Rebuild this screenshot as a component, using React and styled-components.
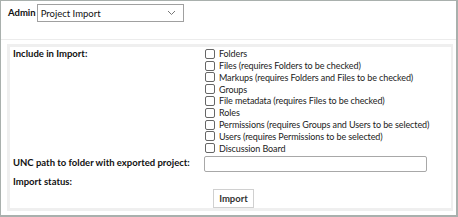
import React from 'react';
import styled, { createGlobalStyle } from 'styled-components';

const GlobalStyle = createGlobalStyle`
  body {
    margin: 0;
    font-family: Lato, "Open Sans", sans-serif;
    background: #fff;
  }
`;

const Root = styled.div`
  width: 458px;
  height: 217px;
  box-sizing: border-box;
  border: 1px solid #a9b0ad;
  border-bottom-width: 2px;
  border-right-width: 2px;
  display: flex;
  flex-direction: column;
  color: #111;
`;

const TopBar = styled.div`
  display: flex;
  align-items: flex-start;
  gap: 1px;
  padding: 3px 7px 0;
  height: 39px;
  box-sizing: border-box;
  border-bottom: 1px solid #ececec;
`;

const Label = styled.span`
  font-size: 9.5px;
  font-weight: 700;
  line-height: 18px;
`;

const Select = styled.div`
  width: 147px;
  height: 18px;
  box-sizing: border-box;
  border: 1px solid #a0a0a0;
  display: flex;
  align-items: center;
  justify-content: space-between;
  padding: 0 7px 0 3px;
  font-size: 9.5px;
`;

const Panel = styled.div`
  margin: 4px 3px 4px 6px;
  flex: 1;
  border: 3px solid #efefef;
  border-right-width: 2px;
  display: grid;
  grid-template-columns: 191px 1fr;
  padding: 1px 0 0 3px;
  align-content: start;
`;

const RowLabel = styled.div`
  font-size: 9.5px;
  font-weight: 700;
  line-height: 12px;
  white-space: nowrap;
  padding-top: ${p => p.top || 0}px;
`;

const Options = styled.div`
  display: flex;
  flex-direction: column;
  padding-left: 1px;
`;

const Option = styled.label`
  display: flex;
  align-items: center;
  gap: 4px;
  height: 11.8px;
  font-size: 9px;
  letter-spacing: -0.1px;
  white-space: nowrap;
  color: #222;
`;

const Box = styled.span`
  width: 10px;
  height: 10px;
  box-sizing: border-box;
  border: 1px solid #666;
  border-radius: 2px;
  background: #fff;
  flex: none;
`;

const PathInput = styled.div`
  width: 223px;
  height: 16px;
  box-sizing: border-box;
  border: 1px solid #a8a8a8;
  border-radius: 2px;
  margin-top: 2px;
`;

const Button = styled.div`
  margin: 1px 0 0 9px;
  width: 41px;
  height: 19px;
  box-sizing: border-box;
  border: 1px solid #d0d0d0;
  display: flex;
  align-items: center;
  justify-content: center;
  font-size: 9.5px;
  font-weight: 700;
  color: #333;
`;

const options = [
  'Folders',
  'Files (requires Folders to be checked)',
  'Markups (requires Folders and Files to be checked)',
  'Groups',
  'File metadata (requires Files to be checked)',
  'Roles',
  'Permissions (requires Groups and Users to be selected)',
  'Users (requires Permissions to be selected)',
  'Discussion Board',
];

export default function App() {
  return (
    <Root>
      <GlobalStyle />
      <TopBar>
        <Label>Admin</Label>
        <Select>
          <span>Project Import</span>
          <svg width="9" height="6" viewBox="0 0 9 6">
            <path d="M1 1l3.5 3.5L8 1" fill="none" stroke="#777" strokeWidth="1" />
          </svg>
        </Select>
      </TopBar>
      <Panel>
        <RowLabel>Include in Import:</RowLabel>
        <Options>
          {options.map(o => (
            <Option key={o}>
              <Box />
              {o}
            </Option>
          ))}
        </Options>
        <RowLabel top={3}>UNC path to folder with exported project:</RowLabel>
        <PathInput />
        <RowLabel top={4}>Import status:</RowLabel>
        <div />
        <div />
        <Button>Import</Button>
      </Panel>
    </Root>
  );
}
